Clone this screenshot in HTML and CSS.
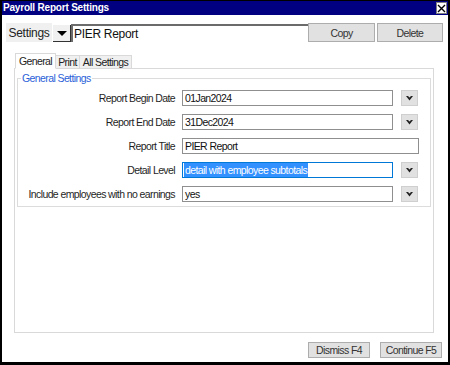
FILE: index.html
```html
<!DOCTYPE html>
<html>
<head>
<meta charset="utf-8">
<title>Payroll Report Settings</title>
<link rel="stylesheet" href="styles.css">
</head>
<body>
<div class="window">
  <div class="titlebar">
    <span class="title">Payroll Report Settings</span>
    <span class="close"><svg width="9" height="9" viewBox="0 0 9 9"><path d="M1 1L8 8M8 1L1 8" stroke="#000" stroke-width="1.4"/></svg></span>
  </div>
  <div class="toprow">
    <div class="set-label">Settings</div>
    <div class="ddbtn"><svg width="10" height="5" viewBox="0 0 10 5"><polygon points="0,0 10,0 5,5" fill="#000"/></svg></div>
    <div class="name-input">PIER Report</div>
    <div class="btn copy">Copy</div>
    <div class="btn delete">Delete</div>
  </div>
  <div class="tabs">
    <div class="tab active">General</div>
    <div class="tab print">Print</div>
    <div class="tab all">All Settings</div>
  </div>
  <div class="panel">
    <fieldset class="group">
      <legend>General Settings</legend>
      <div class="rows">
        <div class="row">
          <div class="label">Report Begin Date</div>
          <div class="field">01Jan2024</div>
          <div class="dd"><svg width="7" height="5" viewBox="0 0 7 5"><polygon points="0,0 2,0 3.5,1.5 5,0 7,0 3.5,4.5" fill="#222"/></svg></div>
        </div>
        <div class="row">
          <div class="label">Report End Date</div>
          <div class="field">31Dec2024</div>
          <div class="dd"><svg width="7" height="5" viewBox="0 0 7 5"><polygon points="0,0 2,0 3.5,1.5 5,0 7,0 3.5,4.5" fill="#222"/></svg></div>
        </div>
        <div class="row">
          <div class="label">Report Title</div>
          <div class="field wide">PIER Report</div>
        </div>
        <div class="row">
          <div class="label">Detail Level</div>
          <div class="field focus"><span class="sel">detail with employee subtotals</span></div>
          <div class="dd"><svg width="7" height="5" viewBox="0 0 7 5"><polygon points="0,0 2,0 3.5,1.5 5,0 7,0 3.5,4.5" fill="#222"/></svg></div>
        </div>
        <div class="row">
          <div class="label">Include employees with no earnings</div>
          <div class="field">yes</div>
          <div class="dd"><svg width="7" height="5" viewBox="0 0 7 5"><polygon points="0,0 2,0 3.5,1.5 5,0 7,0 3.5,4.5" fill="#222"/></svg></div>
        </div>
      </div>
    </fieldset>
  </div>
  <div class="footer">
    <div class="btn fbtn">Dismiss F4</div>
    <div class="btn fbtn">Continue F5</div>
  </div>
</div>
</body>
</html>
```
FILE: styles.css
```css
* { box-sizing: border-box; }
html, body { margin: 0; padding: 0; }
body {
  width: 450px;
  height: 365px;
  overflow: hidden;
  background: #fff;
  font-family: "Liberation Sans", Arial, sans-serif;
  font-size: 10.5px;
  letter-spacing: -0.6px;
  color: #1f1f1f;
}
.window {
  width: 450px;
  height: 365px;
  border: 2px solid #000;
  border-top-width: 1px;
  border-bottom-width: 3px;
  display: flex;
  flex-direction: column;
  background: #fff;
}
.titlebar {
  height: 14px;
  background: #000080;
  display: flex;
  align-items: center;
  justify-content: space-between;
  padding-left: 1px;
}
.title {
  color: #fff;
  font-weight: bold;
  font-size: 10px;
  letter-spacing: -0.2px;
  line-height: 14px;
}
.close {
  width: 11px;
  height: 12px;
  margin-right: 1px;
  background: #fff;
  border: 1px solid #808080;
  display: flex;
  align-items: center;
  justify-content: center;
}
.toprow {
  display: flex;
  margin-top: 8px;
  margin-left: 4px;
  height: 19px;
}
.set-label {
  width: 46px;
  background: #f0f0f0;
  font-size: 12px;
  letter-spacing: -0.3px;
  display: flex;
  align-items: center;
  justify-content: center;
  color: #222;
}
.ddbtn {
  width: 18px;
  height: 17px;
  margin: 2px 0 0 1px;
  background: #f0f0f0;
  border-right: 1px solid #333;
  border-bottom: 1px solid #333;
  display: flex;
  align-items: center;
  justify-content: center;
}
.name-input {
  width: 237px;
  height: 18px;
  margin-top: 1px;
  border-top: 2px solid #6b6b6b;
  border-left: 2px solid #6b6b6b;
  font-size: 12px;
  letter-spacing: -0.3px;
  padding-left: 1px;
  display: flex;
  align-items: center;
  color: #111;
}
.btn {
  height: 19px;
  background: #e1e1e1;
  border: 1px solid #adadad;
  display: flex;
  align-items: center;
  justify-content: center;
  color: #333;
}
.copy { width: 67px; }
.delete { width: 66px; margin-left: 2px; }
.tabs {
  display: flex;
  align-items: flex-end;
  margin: 11px 0 -1px 13px;
  position: relative;
  z-index: 1;
}
.tab {
  height: 14px;
  border: 1px solid #d9d9d9;
  background: #f0f0f0;
  display: flex;
  align-items: center;
  justify-content: center;
  color: #222;
}
.tab.active {
  height: 16px;
  width: 41px;
  background: #fff;
  border-bottom-color: #fff;
  position: relative;
  z-index: 1;
}
.tab.print { width: 25px; margin-left: -1px; }
.tab.all { width: 53px; margin-left: -1px; }
.panel {
  margin-left: 12px;
  width: 420px;
  height: 265px;
  border: 1px solid #d9d9d9;
  background: #fff;
  padding: 3px 0 0 2px;
}
.group {
  width: 414px;
  margin: 0;
  border: 1px solid #dcdcdc;
  padding: 0 0 4px 0;
}
.group legend {
  margin-left: 3px;
  padding: 0 1px;
  line-height: 12px;
  color: #2a5fd8;
}
.rows {
  display: flex;
  flex-direction: column;
  gap: 8px;
  margin-top: 6px;
}
.row {
  display: flex;
  align-items: center;
  height: 16px;
}
.label {
  width: 157px;
  margin-right: 7px;
  text-align: right;
  white-space: nowrap;
}
.field {
  width: 211px;
  height: 16px;
  border: 1px solid #8f8f8f;
  padding-left: 2px;
  line-height: 14px;
  white-space: nowrap;
  overflow: hidden;
  color: #111;
}
.field.wide { width: 237px; }
.field.focus { border-color: #0078d7; padding-left: 1px; }
.sel {
  background: #3390ff;
  color: #fff;
  display: inline-block;
  height: 14px;
  padding: 0 1px;
}
.dd {
  width: 17px;
  height: 16px;
  margin-left: 8px;
  background: #e1e1e1;
  border: 1px solid #cfcfcf;
  display: flex;
  align-items: center;
  justify-content: center;
}
.footer {
  display: flex;
  justify-content: flex-end;
  gap: 10px;
  margin-top: 9px;
  padding-right: 6px;
}
.fbtn { width: 62px; height: 16px; }
```
